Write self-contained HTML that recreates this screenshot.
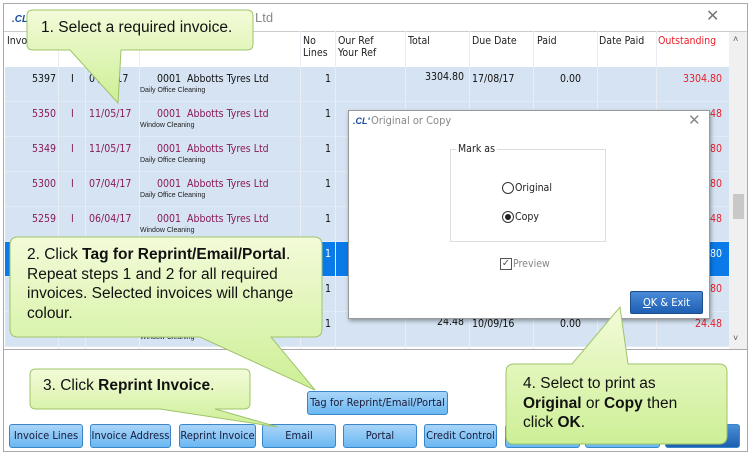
<!DOCTYPE html>
<html><head><meta charset="utf-8"><style>
*{margin:0;padding:0;box-sizing:border-box}
body{width:752px;height:455px;overflow:hidden;background:#fff;font-family:"Liberation Sans",sans-serif;position:relative}
.a{position:absolute}
.t{font-family:"DejaVu Sans Condensed","Liberation Sans",sans-serif;font-size:10.5px;white-space:nowrap}
.row{position:absolute;left:5px;width:724px;height:35px;background:#d5e3f2;border-bottom:1px solid #e2ebf5;color:#8a1a5a}
.row .t{position:absolute;top:6px}
.row .s{position:absolute;top:20px;left:135px;font-size:7px;color:#222;font-family:"Liberation Sans",sans-serif}
.vl{position:absolute;top:31px;width:1px;height:318px;background:#e9eef4}
.btn{position:absolute;top:424px;height:24px;border:1px solid #3a86c8;border-radius:3px;background:linear-gradient(#a9d5f8,#6ab8f2);font-family:"DejaVu Sans Condensed","Liberation Sans",sans-serif;font-size:11px;color:#1a1a3a;text-align:center;line-height:22px;white-space:nowrap;overflow:hidden}
.h{position:absolute;top:35px;font-family:"DejaVu Sans Condensed","Liberation Sans",sans-serif;font-size:10.5px;color:#222;line-height:12px}
.cl{font-size:15.5px;color:#111;line-height:19.5px;position:absolute}
</style></head><body>
<div class="a" style="left:3px;top:3px;width:745px;height:449px;border:1px solid #aaa;background:#fff"></div>
<div class="a" style="left:12px;top:14px;font:bold italic 10px 'Liberation Sans';color:#1a4fa0">.CL'</div>
<div class="a" style="left:255px;top:10px;font-size:13px;color:#888">Ltd</div>
<div class="a" style="left:706px;top:6px;font-size:16px;color:#777">✕</div>
<div class="a" style="left:4px;top:31px;width:743px;height:1px;background:#ccc"></div>
<div class="h" style="left:7px">Invo</div>
<div class="h" style="left:303px">No<br>Lines</div>
<div class="h" style="left:338px">Our Ref<br>Your Ref</div>
<div class="h" style="left:408px">Total</div>
<div class="h" style="left:472px">Due Date</div>
<div class="h" style="left:537px">Paid</div>
<div class="h" style="left:599px">Date Paid</div>
<div class="h" style="left:658px;color:#e8202a">Outstanding</div>
<div class="row" style="top:67px;color:#111"><span class="t" style="right:673px">5397</span><span class="t" style="left:66px">I</span><span class="t" style="left:84px">0 /05/17</span><span class="t" style="left:152px">0001&nbsp; Abbotts Tyres Ltd</span><span class="s">Daily Office Cleaning</span><span class="t" style="right:398px">1</span><span class="t" style="right:265px;top:4px">3304.80</span><span class="t" style="left:467px">17/08/17</span><span class="t" style="right:148px">0.00</span><span class="t" style="right:7px;color:#e8202a">3304.80</span></div>
<div class="row" style="top:102px"><span class="t" style="right:673px">5350</span><span class="t" style="left:66px">I</span><span class="t" style="left:84px">11/05/17</span><span class="t" style="left:152px">0001&nbsp; Abbotts Tyres Ltd</span><span class="s">Window Cleaning</span><span class="t" style="right:398px;color:#111">1</span><span class="t" style="right:7px;color:#e8202a">.48</span></div>
<div class="row" style="top:137px"><span class="t" style="right:673px">5349</span><span class="t" style="left:66px">I</span><span class="t" style="left:84px">11/05/17</span><span class="t" style="left:152px">0001&nbsp; Abbotts Tyres Ltd</span><span class="s">Daily Office Cleaning</span><span class="t" style="right:398px;color:#111">1</span><span class="t" style="right:7px;color:#e8202a">.80</span></div>
<div class="row" style="top:172px"><span class="t" style="right:673px">5300</span><span class="t" style="left:66px">I</span><span class="t" style="left:84px">07/04/17</span><span class="t" style="left:152px">0001&nbsp; Abbotts Tyres Ltd</span><span class="s">Daily Office Cleaning</span><span class="t" style="right:398px;color:#111">1</span><span class="t" style="right:7px;color:#e8202a">.80</span></div>
<div class="row" style="top:207px"><span class="t" style="right:673px">5259</span><span class="t" style="left:66px">I</span><span class="t" style="left:84px">06/04/17</span><span class="t" style="left:152px">0001&nbsp; Abbotts Tyres Ltd</span><span class="s">Window Cleaning</span><span class="t" style="right:398px;color:#111">1</span><span class="t" style="right:7px;color:#e8202a">.48</span></div>
<div class="row" style="top:242px;background:#0a7ae8;color:#fff"><span class="t" style="right:398px">1</span><span class="t" style="right:7px">.80</span></div>
<div class="row" style="top:277px"><span class="t" style="right:398px;color:#111">1</span><span class="t" style="right:7px;color:#e8202a">.80</span></div>
<div class="row" style="top:312px;color:#111"><span class="s" style="left:135px;top:22px">Window Cleaning</span><span class="t" style="right:398px">1</span><span class="t" style="right:265px;top:4px">24.48</span><span class="t" style="left:467px">10/09/16</span><span class="t" style="right:148px">0.00</span><span class="t" style="right:7px;color:#e8202a">24.48</span></div>
<div class="vl" style="left:58px"></div><div class="vl" style="left:85px"></div><div class="vl" style="left:139px"></div><div class="vl" style="left:300px"></div><div class="vl" style="left:335px"></div><div class="vl" style="left:405px"></div><div class="vl" style="left:469px"></div><div class="vl" style="left:533px"></div><div class="vl" style="left:597px"></div><div class="vl" style="left:656px"></div>
<div class="a" style="left:729px;top:32px;width:18px;height:317px;background:#f0f0f0"></div>
<div class="a" style="left:733px;top:34px;font-size:9px;color:#555">˄</div>
<div class="a" style="left:733px;top:194px;width:11px;height:25px;background:#c8c8c8"></div>
<div class="a" style="left:733px;top:333px;font-size:9px;color:#555">˅</div>
<div class="a" style="left:4px;top:349px;width:743px;height:1px;background:#aaa"></div>
<div class="btn" style="left:307px;top:391px;width:141px">Tag for Reprint/Email/Portal</div>
<div class="btn" style="left:9px;width:74px">Invoice Lines</div>
<div class="btn" style="left:90px;width:81px">Invoice Address</div>
<div class="btn" style="left:179px;width:77px">Reprint Invoice</div>
<div class="btn" style="left:262px;width:74px">Email</div>
<div class="btn" style="left:343px;width:74px">Portal</div>
<div class="btn" style="left:424px;width:73px">Credit Control</div>
<div class="btn" style="left:505px;width:75px"></div>
<div class="btn" style="left:585px;width:75px"></div>
<div class="btn" style="left:665px;width:75px;background:linear-gradient(#4a8fd8,#1c5fb0)"></div>
<div class="a" style="left:348px;top:110px;width:362px;height:209px;background:#fff;border:1px solid #9a9a9a;box-shadow:1px 2px 4px rgba(0,0,0,.35)"></div>
<div class="a" style="left:353px;top:116px;font:bold italic 9px 'Liberation Sans';color:#1a4fa0">.CL'</div>
<div class="a t" style="left:371px;top:114px;font-size:11px;color:#888">Original or Copy</div>
<div class="a" style="left:688px;top:111px;font-size:15px;color:#888">✕</div>
<div class="a" style="left:450px;top:149px;width:156px;height:93px;border:1px solid #ddd"></div>
<div class="a t" style="left:456px;top:143px;background:#fff;padding:0 2px;font-size:10.5px;color:#222">Mark as</div>
<div class="a" style="left:502px;top:182px;width:12px;height:12px;border:1px solid #333;border-radius:50%;background:#fff"></div>
<div class="a t" style="left:515px;top:182px;color:#222">Original</div>
<div class="a" style="left:502px;top:211px;width:12px;height:12px;border:1px solid #333;border-radius:50%;background:#fff"></div>
<div class="a" style="left:505px;top:214px;width:6px;height:6px;border-radius:50%;background:#222"></div>
<div class="a t" style="left:515px;top:211px;color:#222">Copy</div>
<div class="a" style="left:500px;top:258px;width:12px;height:12px;border:1px solid #555;background:#fff;font-size:10px;line-height:10px;color:#555;text-align:center">✓</div>
<div class="a t" style="left:513px;top:258px;color:#888">Preview</div>
<div class="a t" style="left:630px;top:291px;width:73px;height:23px;border:1px solid #1d4e8c;border-radius:2px;background:linear-gradient(#4a8ad8,#1d5fb3);color:#fff;text-align:center;line-height:21px;font-size:11px"><u>O</u>K &amp; Exit</div>
<svg class="a" style="left:0;top:0" width="752" height="455">
<defs><linearGradient id="g" x1="0" y1="0" x2="0" y2="1"><stop offset="0" stop-color="#f3fbd9"/><stop offset="1" stop-color="#cdef96"/></linearGradient></defs>
<g fill="url(#g)" stroke="#9fc46a" stroke-width="1">
<path d="M33,10 H247 Q253,10 253,16 V44 Q253,50 247,50 H121 L118,103 L70,50 H33 Q27,50 27,44 V16 Q27,10 33,10 Z"/>
<path d="M18,237 H314 Q322,237 322,245 V329 Q322,337 314,337 H271 L315,390 L200,337 H18 Q10,337 10,329 V245 Q10,237 18,237 Z"/>
<path d="M36,369 H244 Q250,369 250,375 V403 Q250,409 244,409 H215 L278,427 L160,409 H36 Q30,409 30,403 V375 Q30,369 36,369 Z"/>
<path d="M514,364 H572 L620,307 L628,364 H719 Q727,364 727,372 V436 Q727,444 719,444 H514 Q506,444 506,436 V372 Q506,364 514,364 Z"/>
</g></svg>
<div class="cl" style="left:41px;top:18px">1. Select a required invoice.</div>
<div class="cl" style="left:27px;top:245px">2. Click <b>Tag for Reprint/Email/Portal</b>.<br>Repeat steps 1 and 2 for all required<br>invoices. Selected invoices will change<br>colour.</div>
<div class="cl" style="left:43px;top:376px">3. Click <b>Reprint Invoice</b>.</div>
<div class="cl" style="left:523px;top:374px">4. Select to print as<br><b>Original</b> or <b>Copy</b> then<br>click <b>OK</b>.</div>
</body></html>
